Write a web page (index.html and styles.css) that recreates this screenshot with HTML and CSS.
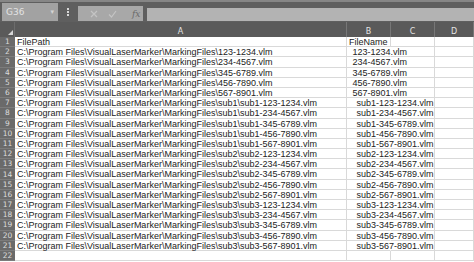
FILE: index.html
```html
<!DOCTYPE html>
<html>
<head>
<meta charset="utf-8">
<link rel="stylesheet" href="styles.css">
</head>
<body>
<div class="app">
  <div class="fbar">
    <div class="namebox"><span class="ref">G36</span><span class="caret">▾</span></div>
    <div class="dots"><i></i><i></i><i></i></div>
    <div class="fxbox">
      <svg class="ico" width="8" height="8" viewBox="0 0 8 8"><path d="M1 1L7 7M7 1L1 7" stroke="#c4c4c4" stroke-width="1.2"/></svg>
      <svg class="ico" width="9" height="8" viewBox="0 0 9 8"><path d="M1 4.5L3.5 7L8 1" stroke="#c4c4c4" stroke-width="1.2" fill="none"/></svg>
      <span class="fx">fx</span>
    </div>
    <div class="finput"></div>
  </div>
  <div class="sheet" id="sheet">
    <div class="corner"><span class="tri"></span></div>
    <div class="ch">A</div>
    <div class="ch">B</div>
    <div class="ch">C</div>
    <div class="ch">D</div>
  </div>
</div>
<script src="app.js"></script>
</body>
</html>
```

FILE: app.js
```js
var base = "C:\\Program Files\\VisualLaserMarker\\MarkingFiles\\";
var nums = ["123-1234", "234-4567", "345-6789", "456-7890", "567-8901"];
var rows = [["FilePath", "FileName", ""]];
nums.forEach(function (n) {
  rows.push([base + n + ".vlm", n + ".vlm", "i1"]);
});
["sub1", "sub2", "sub3"].forEach(function (s) {
  nums.forEach(function (n) {
    rows.push([base + s + "\\" + s + "-" + n + ".vlm", s + "-" + n + ".vlm", "i2"]);
  });
});
rows.push(["", "", ""]);
var sheet = document.getElementById("sheet");
rows.forEach(function (r, i) {
  var cells = [
    ["rh", String(i + 1)],
    ["c ca", r[0]],
    ["c cb" + (r[2] ? " ov " + r[2] : ""), r[1]],
    ["c cc", ""],
    ["c cd", ""]
  ];
  cells.forEach(function (c) {
    var d = document.createElement("div");
    d.className = c[0];
    d.textContent = c[1];
    sheet.appendChild(d);
  });
});
```

FILE: styles.css
```css
html, body { margin: 0; padding: 0; }
body { width: 474px; height: 262px; overflow: hidden; background: #fff; }
.app { width: 474px; height: 262px; overflow: hidden; display: flex; flex-direction: column; }

.fbar {
  height: 20px;
  background: #5f5f5f;
  border-top: 2px solid #868686;
  display: flex;
  align-items: flex-start;
}
.namebox {
  margin-left: 2px;
  margin-top: 1px;
  width: 56px;
  height: 18px;
  background: #a2a2a2;
  display: flex;
  align-items: center;
  justify-content: space-between;
  box-sizing: border-box;
  padding: 0 4px 0 4px;
  font-family: "DejaVu Sans", sans-serif;
  font-size: 9px;
  color: #e2e2e2;
}
.caret { font-size: 7px; color: #d4d4d4; }
.dots {
  width: 20px;
  height: 20px;
  display: flex;
  flex-direction: column;
  align-items: center;
  justify-content: center;
  gap: 1px;
}
.dots i { width: 2px; height: 2px; background: #d8d8d8; display: block; }
.fxbox {
  margin-top: 4px;
  width: 65px;
  height: 15px;
  background: #a8a8a8;
  display: flex;
  align-items: center;
  padding-left: 12px;
  box-sizing: border-box;
  gap: 10px;
  font-family: "DejaVu Serif", serif;
}
.fx { font-style: italic; font-size: 9px; color: #6a6a6a; margin-left: 5px; }
.finput {
  margin-top: 6px;
  margin-left: 4px;
  flex: 1;
  height: 13px;
  background: #b3b3b3;
}

.sheet {
  display: grid;
  grid-template-columns: 15px 332px 44px 44px 39px;
  grid-template-rows: 15px repeat(22, 10.2px);
  background: #fff;
  font-family: "Liberation Sans", Arial, sans-serif;
  font-size: 9px;
  color: #222;
}
.corner {
  background: #5a5a5a;
  position: relative;
  border-right: 1px solid #6c6c6c;
}
.tri {
  position: absolute;
  right: 1px;
  bottom: 2px;
  width: 0; height: 0;
  border-left: 5px solid transparent;
  border-bottom: 5px solid #d6d6d6;
}
.ch {
  background: #5a5a5a;
  color: #e4e4e4;
  font-family: "DejaVu Sans", sans-serif;
  font-size: 8px;
  display: flex;
  align-items: center;
  justify-content: center;
  border-right: 1px solid #777;
  padding-top: 3px;
  box-sizing: border-box;
}
.rh {
  background: #6a6a6a;
  color: #dcdcdc;
  font-family: "DejaVu Sans", sans-serif;
  font-size: 7.5px;
  display: flex;
  align-items: center;
  justify-content: center;
  border-bottom: 1px solid #7c7c7c;
  box-sizing: border-box;
}
.c {
  border-right: 1px solid #d9d9d9;
  border-bottom: 1px solid #d9d9d9;
  box-sizing: border-box;
  white-space: pre;
  line-height: 10px;
  padding-left: 2px;
  overflow: visible;
}
.cb.ov { border-right-color: transparent; }
.cb.i1 { padding-left: 5.5px; }
.cb.i2 { padding-left: 9.5px; }
```
